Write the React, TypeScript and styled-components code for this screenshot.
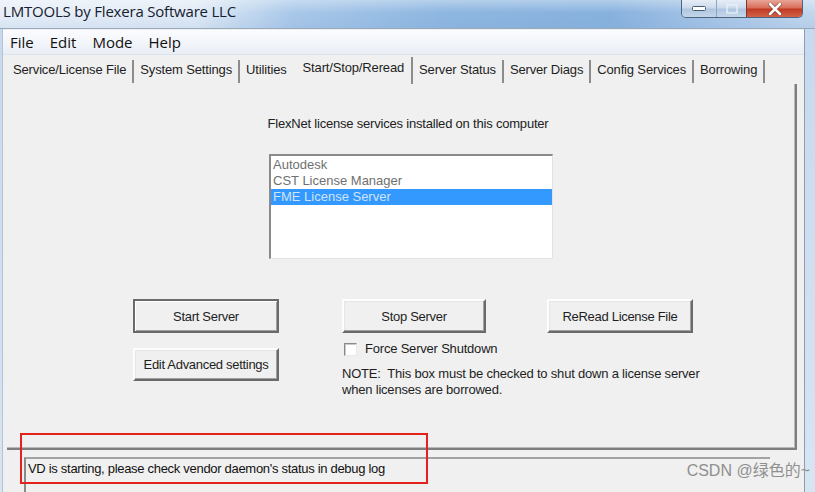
import React from 'react';
import styled, { createGlobalStyle } from 'styled-components';

const GlobalStyle = createGlobalStyle`
  html, body {
    margin: 0;
    padding: 0;
    background: #f0f0f0;
    overflow: hidden;
  }
`;

const Window = styled.div`
  position: relative;
  width: 815px;
  height: 492px;
  display: flex;
  flex-direction: column;
  background: #f0f0f0;
  font-family: "Liberation Sans", Arial, sans-serif;
  color: #1c1c1c;
  overflow: hidden;
`;

const TitleBar = styled.div`
  height: 28px;
  flex: none;
  display: flex;
  justify-content: space-between;
  align-items: flex-start;
  background:
    linear-gradient(180deg, rgba(255,255,255,0.35) 0%, rgba(255,255,255,0) 45%, rgba(120,160,210,0.15) 100%),
    linear-gradient(90deg, #e8eff8 0%, #e1ebf6 24%, #a9c8e9 36%, #8db6e0 55%, #88b2de 75%, #a8c6e7 88%, #c2d7ee 100%);
  border-bottom: 1px solid #97a8bd;
`;

const TitleText = styled.div`
  font-family: "Open Sans", "Noto Sans", sans-serif;
  font-size: 15px;
  line-height: 22px;
  padding-left: 3px;
  color: #15202e;
  letter-spacing: -0.2px;
`;

const Controls = styled.div`
  display: flex;
  margin-right: 12px;
  height: 17px;
  border: 1px solid #4d6480;
  border-top: none;
  border-radius: 0 0 5px 5px;
  overflow: hidden;
`;

const CtlButton = styled.div<{ $close?: boolean; $w: number }>`
  width: ${p => p.$w}px;
  height: 17px;
  display: flex;
  align-items: center;
  justify-content: center;
  border-left: ${p => (p.$close ? '1px solid #7b3a30' : '1px solid #8fa6c2')};
  background: ${p =>
    p.$close
      ? 'linear-gradient(180deg, #e8a597 0%, #d86f5c 45%, #c23b24 55%, #d2614a 100%)'
      : 'linear-gradient(180deg, #e6eef7 0%, #cbdaec 45%, #b0c6e0 55%, #c5d6ea 100%)'};
  &:first-child { border-left: none; }
`;

const Body = styled.div`
  flex: 1;
  display: flex;
  min-height: 0;
`;

const FrameSide = styled.div<{ $w: number }>`
  width: ${p => p.$w}px;
  flex: none;
  background: linear-gradient(180deg, #c6d9ee 0%, #d7e5f3 100%);
`;

const Client = styled.div`
  flex: 1;
  display: flex;
  flex-direction: column;
  border-left: 1px solid #b7c3d0;
  border-right: 1px solid #8e9cab;
  background: #f0f0f0;
`;

const MenuBar = styled.div`
  height: 24px;
  flex: none;
  display: flex;
  align-items: center;
  gap: 16px;
  padding-left: 7px;
  margin-top: 1px;
  background: linear-gradient(180deg, #fbfcfe 0%, #f1f4f9 60%, #e9eef5 100%);
  border-bottom: 1px solid #dde3ea;
`;

const MenuItem = styled.span`
  font-family: "Open Sans", "Noto Sans", sans-serif;
  font-size: 15px;
  color: #111;
`;

const TabRow = styled.div`
  height: 29px;
  flex: none;
  display: flex;
  align-items: flex-end;
  padding-left: 4px;
`;

const Tab = styled.div<{ $active?: boolean; $beforeActive?: boolean }>`
  font-size: 13px;
  letter-spacing: -0.15px;
  line-height: 16px;
  padding: ${p => (p.$active ? '3px 7px 8px 8px' : '2px 6px 5px 6px')};
  margin-bottom: ${p => (p.$active ? '0' : '1px')};
  color: #1e1e1e;
  border-right: 2px solid ${p => (p.$beforeActive ? 'transparent' : '#8c8c8c')};
  background: #f0f0f0;
  white-space: nowrap;
`;

const Panel = styled.div`
  width: 790px;
  height: 366px;
  margin-left: 4px;
  box-sizing: border-box;
  border-right: 2px solid #7e7e7e;
  border-bottom: 2px solid #7e7e7e;
  box-shadow: inset -1px -1px 0 #b8b8b8;
  display: flex;
  flex-direction: column;
  align-items: center;
  flex: none;
`;

const Heading = styled.div`
  margin-top: 32px;
  font-size: 13px;
  letter-spacing: -0.2px;
  line-height: 16px;
  color: #222;
  padding-left: 14px;
`;

const ListBox = styled.div`
  margin-top: 22px;
  margin-left: 20px;
  width: 284px;
  height: 105px;
  box-sizing: border-box;
  background: #fff;
  border-top: 2px solid #8a8a8a;
  border-left: 2px solid #8a8a8a;
  border-right: 1px solid #e2e2e2;
  border-bottom: 1px solid #e2e2e2;
  padding-top: 1px;
`;

const ListItem = styled.div<{ $selected?: boolean }>`
  height: 16px;
  line-height: 16px;
  font-size: 13px;
  padding-left: 2px;
  color: ${p => (p.$selected ? '#cfe3fa' : '#707070')};
  background: ${p => (p.$selected ? '#3399ff' : 'transparent')};
`;

const Controls3 = styled.div`
  margin-top: 40px;
  align-self: flex-start;
  margin-left: 126px;
  display: grid;
  grid-template-columns: 146px 146px 146px;
  column-gap: 61px;
  row-gap: 8px;
`;

const Button = styled.div<{ $default?: boolean; $h?: number }>`
  height: ${p => p.$h ?? 34}px;
  box-sizing: border-box;
  display: flex;
  align-items: center;
  justify-content: center;
  font-size: 13px;
  letter-spacing: -0.3px;
  color: #1e1e1e;
  background: #f0f0f0;
  border-top: 2px solid ${p => (p.$default ? '#6a6a6a' : '#fdfdfd')};
  border-left: 2px solid ${p => (p.$default ? '#6a6a6a' : '#fdfdfd')};
  border-right: 2px solid #6a6a6a;
  border-bottom: 2px solid #6a6a6a;
  box-shadow: ${p =>
    p.$default
      ? 'inset 1px 1px 0 #ffffff, inset -1px -1px 0 #a0a0a0'
      : 'inset -1px -1px 0 #a0a0a0, inset 1px 1px 0 #e6e6e6'};
`;

const MidButton = styled(Button)`
  margin-left: 2px;
`;

const EditButton = styled(Button)`
  margin-top: 7px;
`;

const OptionBlock = styled.div`
  grid-column: 2 / span 2;
  display: flex;
  flex-direction: column;
  padding-left: 2px;
`;

const CheckRow = styled.label`
  display: flex;
  align-items: center;
  gap: 8px;
  margin-left: 2px;
  font-size: 13px;
  letter-spacing: -0.2px;
  line-height: 16px;
`;

const CheckBox = styled.span`
  width: 13px;
  height: 13px;
  box-sizing: border-box;
  background: #fff;
  border-top: 1px solid #8a8a8a;
  border-left: 1px solid #8a8a8a;
  border-right: 1px solid #e8e8e8;
  border-bottom: 1px solid #e8e8e8;
  box-shadow: inset 1px 1px 0 #c9c9c9;
`;

const Note = styled.div`
  margin-top: 9px;
  font-size: 13px;
  letter-spacing: -0.2px;
  line-height: 16px;
  color: #1e1e1e;
  white-space: pre;
`;

const StatusBar = styled.div`
  flex: 1;
  display: flex;
  align-items: flex-end;
  padding-left: 21px;
`;

const StatusField = styled.div`
  width: 746px;
  height: 35px;
  box-sizing: border-box;
  border-top: 2px solid #a2a2a2;
  border-left: 2px solid #8a8a8a;
  padding-left: 2px;
  font-size: 13px;
  letter-spacing: -0.3px;
  line-height: 20px;
  color: #111;
`;

const Annotation = styled.div`
  position: absolute;
  left: 20px;
  top: 433px;
  width: 408px;
  height: 51px;
  box-sizing: border-box;
  border: 2px solid #e3211d;
`;

const Credit = styled.div`
  position: absolute;
  right: 5px;
  bottom: 11px;
  font-family: "Liberation Sans", "Noto Sans CJK SC", sans-serif;
  font-size: 16px;
  color: #8f8f8f;
`;

const App: React.FC = () => {
  const tabs = [
    'Service/License File',
    'System Settings',
    'Utilities',
    'Start/Stop/Reread',
    'Server Status',
    'Server Diags',
    'Config Services',
    'Borrowing',
  ];
  const activeTab = 'Start/Stop/Reread';
  const activeIndex = tabs.indexOf(activeTab);
  const services = ['Autodesk', 'CST License Manager', 'FME License Server'];

  return (
    <Window>
      <GlobalStyle />
      <TitleBar>
        <TitleText>LMTOOLS by Flexera Software LLC</TitleText>
        <Controls>
          <CtlButton $w={34}>
            <svg width="14" height="6" viewBox="0 0 14 6">
              <rect x="0.5" y="0.5" width="13" height="4" rx="1" fill="#fff" stroke="#4b5d74" />
            </svg>
          </CtlButton>
          <CtlButton $w={29}>
            <svg width="12" height="10" viewBox="0 0 12 10">
              <rect x="1" y="1" width="10" height="8" fill="none" stroke="#eef3f9" strokeWidth="1.5" opacity="0.8" />
            </svg>
          </CtlButton>
          <CtlButton $w={55} $close>
            <svg width="14" height="12" viewBox="0 0 14 12">
              <path d="M2 1 L12 11 M12 1 L2 11" stroke="#4a1a12" strokeWidth="4" strokeLinecap="round" opacity="0.5" />
              <path d="M2 1 L12 11 M12 1 L2 11" stroke="#fff" strokeWidth="2.6" strokeLinecap="round" />
            </svg>
          </CtlButton>
        </Controls>
      </TitleBar>
      <Body>
        <FrameSide $w={2} />
        <Client>
          <MenuBar>
            <MenuItem>File</MenuItem>
            <MenuItem>Edit</MenuItem>
            <MenuItem>Mode</MenuItem>
            <MenuItem>Help</MenuItem>
          </MenuBar>
          <TabRow>
            {tabs.map((t, i) => (
              <Tab key={t} $active={i === activeIndex} $beforeActive={i === activeIndex - 1}>{t}</Tab>
            ))}
          </TabRow>
          <Panel>
            <Heading>FlexNet license services installed on this computer</Heading>
            <ListBox>
              {services.map(s => (
                <ListItem key={s} $selected={s === 'FME License Server'}>{s}</ListItem>
              ))}
            </ListBox>
            <Controls3>
              <Button $default>Start Server</Button>
              <MidButton>Stop Server</MidButton>
              <Button>ReRead License File</Button>
              <div>
                <EditButton $h={33}>Edit Advanced settings</EditButton>
              </div>
              <OptionBlock>
                <CheckRow>
                  <CheckBox />
                  Force Server Shutdown
                </CheckRow>
                <Note>{'NOTE:  This box must be checked to shut down a license server\nwhen licenses are borrowed.'}</Note>
              </OptionBlock>
            </Controls3>
          </Panel>
          <StatusBar>
            <StatusField>VD is starting, please check vendor daemon's status in debug log</StatusField>
          </StatusBar>
        </Client>
        <FrameSide $w={10} />
      </Body>
      <Annotation />
      <Credit>CSDN @绿色的~</Credit>
    </Window>
  );
};

export default App;
